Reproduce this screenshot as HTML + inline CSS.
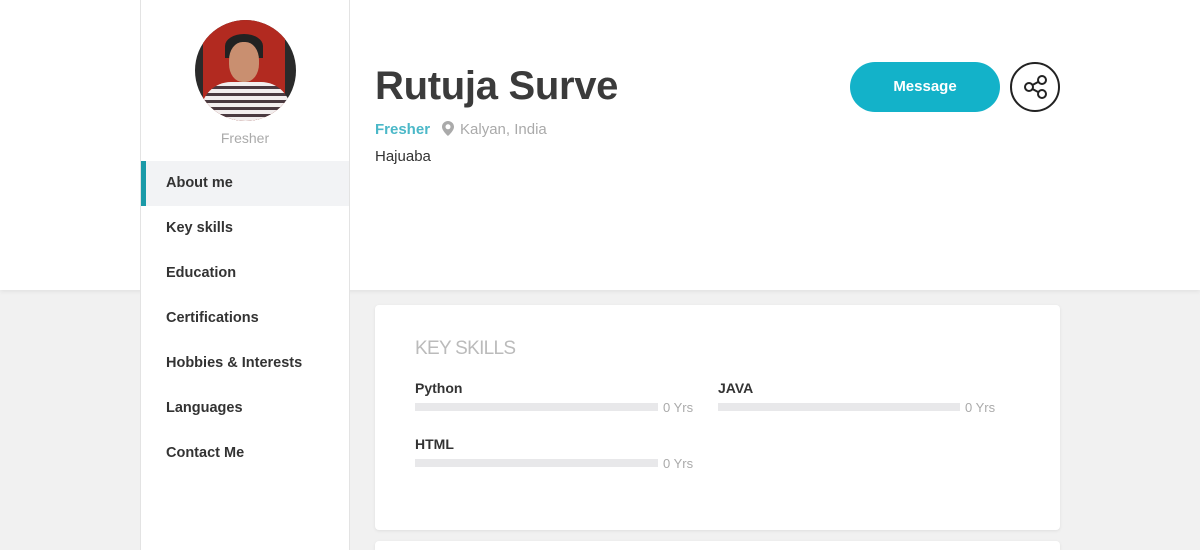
<!DOCTYPE html>
<html><head><style>
*{margin:0;padding:0;box-sizing:border-box}
html,body{width:1200px;height:550px;overflow:hidden}
body{background:#f1f1f1;font-family:"Liberation Sans",sans-serif;position:relative}
.top{position:absolute;left:0;top:0;width:1200px;height:290px;background:#fff;box-shadow:0 2px 4px rgba(0,0,0,.06)}
.side{position:absolute;left:140px;top:0;width:210px;height:550px;background:#fff;border-left:1px solid #e3e3e3;border-right:1px solid #e3e3e3}
.av{position:absolute;left:54px;top:20px;width:101px;height:101px;border-radius:50%;overflow:hidden;background:#2a2a2a}
.av .red{position:absolute;left:8px;top:0;width:82px;height:101px;background:#b22a20}
.av .shirt{position:absolute;left:6px;top:62px;width:90px;height:45px;border-radius:30px 30px 0 0;background:repeating-linear-gradient(#f2eeee 0 4px,#4a3a40 4px 7px)}
.av .face{position:absolute;left:34px;top:22px;width:30px;height:40px;border-radius:45%;background:#c98f70}
.av .hair{position:absolute;left:30px;top:14px;width:38px;height:24px;border-radius:50% 50% 0 0;background:#222}
.sub{position:absolute;top:130px;width:208px;text-align:center;font-size:14px;color:#aaa}
.menu{position:absolute;top:161px;left:0;width:208px}
.menu div{height:45px;line-height:45px;padding-left:25px;font-size:14.5px;font-weight:bold;color:#333}
.menu .act{background:#f2f3f5;border-left:5px solid #1a9aa8;padding-left:20px}
h1{position:absolute;left:375px;top:64px;font-size:40px;color:#3b3b3b;font-weight:bold;letter-spacing:-0.3px}
.meta{position:absolute;left:375px;top:121px;font-size:15px}
.meta b{color:#4bb8c8}
.meta span{color:#aaa;margin-left:12px}
.hj{position:absolute;left:375px;top:148px;font-size:15px;color:#333}
.btn{position:absolute;left:850px;top:62px;width:150px;height:50px;border-radius:25px;background:#13b2c9;color:#fff;font-weight:bold;font-size:15px;text-align:center;line-height:50px}
.share{position:absolute;left:1010px;top:62px;width:50px;height:50px;border-radius:50%;border:2px solid #222}
.card{position:absolute;left:375px;top:305px;width:685px;height:225px;background:#fff;border-radius:4px;box-shadow:0 1px 3px rgba(0,0,0,.08)}
.card2{top:541px;height:9px;border-radius:4px 4px 0 0}
.kt{position:absolute;left:40px;top:33px;font-size:19px;color:#bbb;letter-spacing:-0.7px}
.sk{position:absolute;font-size:14px;font-weight:bold;color:#333}
.bar{position:absolute;width:243px;height:8px;background:#e8e8ea}
.yr{position:absolute;font-size:13px;color:#aaa}
</style></head><body>
<div class="top"></div>
<div class="side">
 <div class="av"><div class="red"></div><div class="hair"></div><div class="face"></div><div class="shirt"></div></div>
 <div class="sub">Fresher</div>
 <div class="menu">
  <div class="act">About me</div><div>Key skills</div><div>Education</div><div>Certifications</div><div>Hobbies &amp; Interests</div><div>Languages</div><div>Contact Me</div>
 </div>
</div>
<h1>Rutuja Surve</h1>
<div class="meta"><b>Fresher</b><span><svg width="12" height="15" viewBox="0 0 12 15" style="vertical-align:-2px;margin-right:6px"><path d="M6 0C2.7 0 0 2.6 0 5.8 0 10 6 15 6 15s6-5 6-9.2C12 2.6 9.3 0 6 0zm0 8.3a2.5 2.5 0 1 1 0-5 2.5 2.5 0 0 1 0 5z" fill="#aaa"/></svg>Kalyan, India</span></div>
<div class="hj">Hajuaba</div>
<div class="btn">Message</div>
<div class="share"><svg width="46" height="46" viewBox="0 0 46 46"><g fill="none" stroke="#222" stroke-width="2"><circle cx="30" cy="16" r="4"/><circle cx="17" cy="23" r="4"/><circle cx="30" cy="30" r="4"/><path d="M20.5 21l6-3.3M20.5 25l6 3.3"/></g></svg></div>
<div class="card">
 <div class="kt">KEY SKILLS</div>
 <div class="sk" style="left:40px;top:75px">Python</div>
 <div class="bar" style="left:40px;top:98px"></div><div class="yr" style="left:288px;top:95px">0 Yrs</div>
 <div class="sk" style="left:343px;top:75px">JAVA</div>
 <div class="bar" style="left:343px;top:98px;width:242px"></div><div class="yr" style="left:590px;top:95px">0 Yrs</div>
 <div class="sk" style="left:40px;top:131px">HTML</div>
 <div class="bar" style="left:40px;top:154px"></div><div class="yr" style="left:288px;top:151px">0 Yrs</div>
</div>
<div class="card card2"></div>
</body></html>
